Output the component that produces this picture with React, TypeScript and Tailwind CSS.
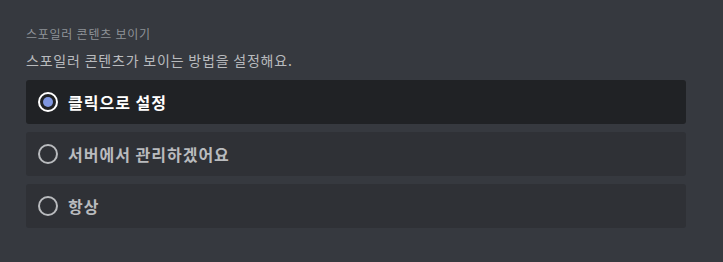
import { useState } from "react";

const options = [
  { id: "click", label: "클릭으로 설정" },
  { id: "server", label: "서버에서 관리하겠어요" },
  { id: "always", label: "항상" },
];

function Radio({ checked }: { checked: boolean }) {
  return (
    <span className="flex size-5 shrink-0 items-center justify-center rounded-full border-2 border-[#b9bbbe] data-[on=true]:border-white" data-on={checked}>
      {checked && <span className="size-2.5 rounded-full bg-[#7f96e0]" />}
    </span>
  );
}

export default function App() {
  const [value, setValue] = useState("click");

  return (
    <div
      className="h-[262px] w-full bg-[#36393f] px-[26px] pt-[26px]"
      style={{ fontFamily: '"Noto Sans CJK KR", "Noto Sans", sans-serif' }}
    >
      <h2 className="text-xs leading-4 tracking-[0.75px] text-[#8e9297]">스포일러 콘텐츠 보이기</h2>
      <p className="mt-2 text-sm leading-5 tracking-[0.8px] text-[#b9bbbe]">
        스포일러 콘텐츠가 보이는 방법을 설정해요.
      </p>
      <div role="radiogroup" className="mt-[10px] flex w-[660px] flex-col gap-2">
        {options.map((o) => {
          const on = o.id === value;
          return (
            <button
              key={o.id}
              role="radio"
              aria-checked={on}
              onClick={() => setValue(o.id)}
              className={
                on
                  ? "flex h-11 items-center gap-[10px] rounded-[3px] bg-[#202225] px-3 text-left text-base font-bold tracking-[1px] text-white"
                  : "flex h-11 items-center gap-[10px] rounded-[3px] bg-[#2f3136] px-3 text-left text-base font-bold tracking-[1px] text-[#b9bbbe]"
              }
            >
              <Radio checked={on} />
              <span>{o.label}</span>
            </button>
          );
        })}
      </div>
    </div>
  );
}
